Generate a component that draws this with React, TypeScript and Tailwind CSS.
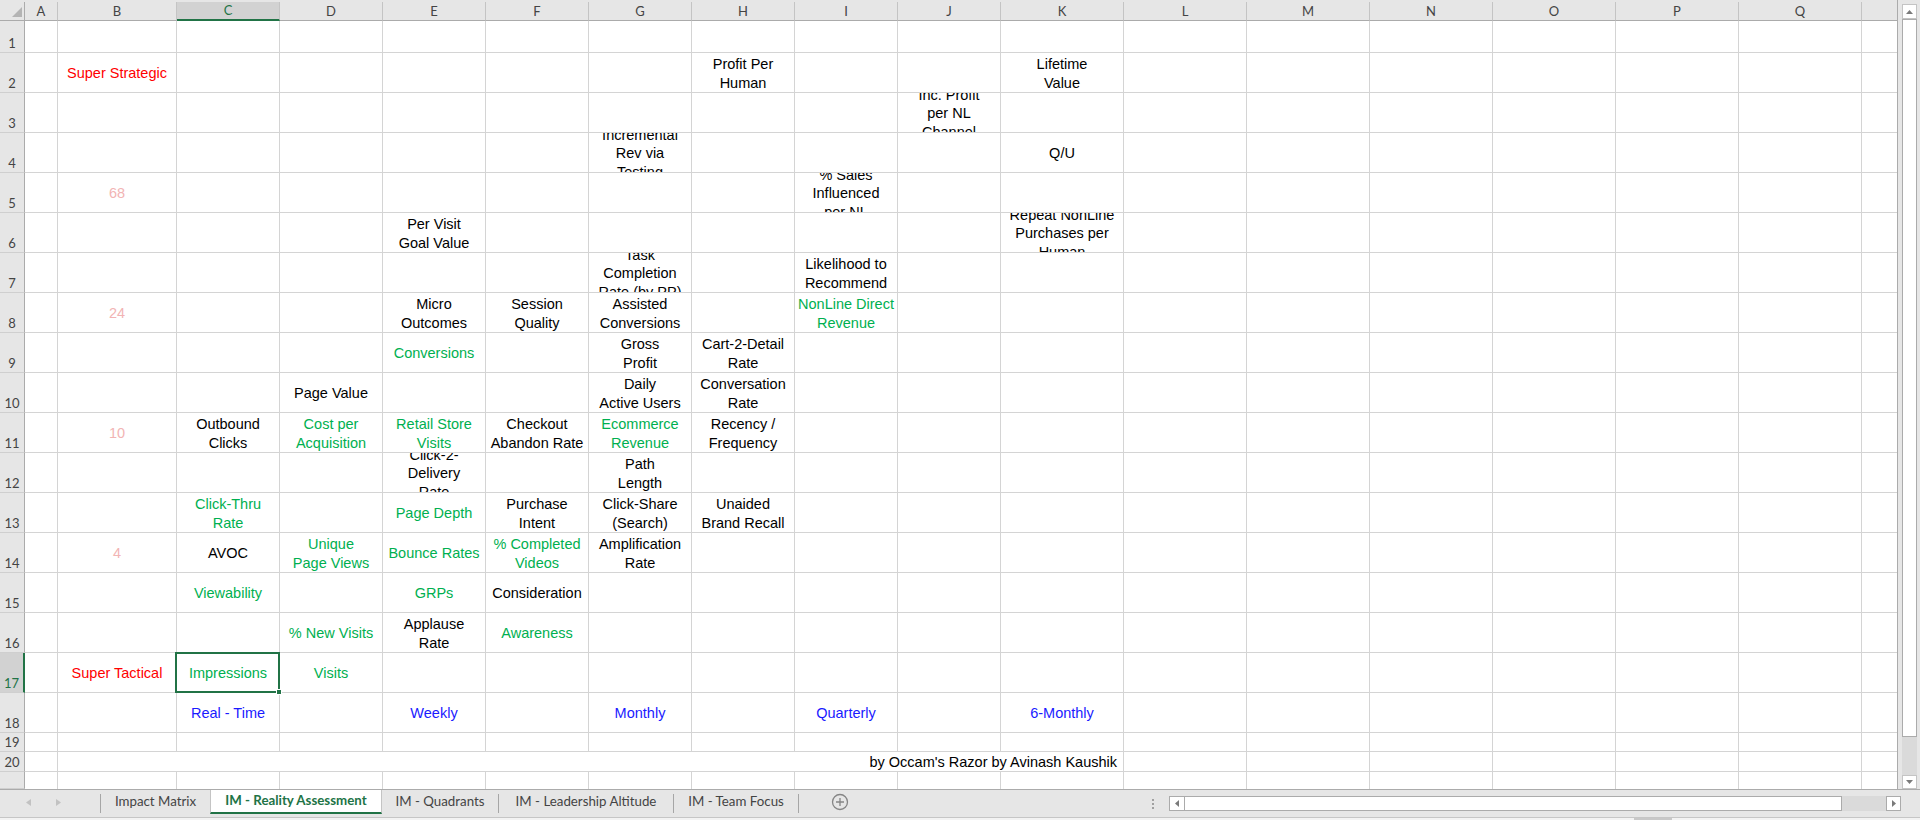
import React from "react";

type Tone = "k" | "r" | "g" | "b" | "p";

const tone: Record<Tone, string> = {
  k: "text-black",
  r: "text-[#ff0000]",
  g: "text-[#00b050]",
  b: "text-[#1a1aff]",
  p: "text-[#f2b4b4]",
};

const letters = "ABCDEFGHIJKLMNOPQR".split("");

// row -> column -> [text, colour]
const cells: Record<number, Record<string, [string, Tone]>> = {
  2: { B: ["Super Strategic", "r"], H: ["Profit Per\nHuman", "k"], K: ["Lifetime\nValue", "k"] },
  3: { J: ["Inc. Profit\nper NL\nChannel", "k"] },
  4: { G: ["Incremental\nRev via\nTesting", "k"], K: ["Q/U", "k"] },
  5: { B: ["68", "p"], I: ["% Sales\nInfluenced\nper NL", "k"] },
  6: { E: ["Per Visit\nGoal Value", "k"], K: ["Repeat NonLine\nPurchases per\nHuman", "k"] },
  7: { G: ["Task\nCompletion\nRate (by PP)", "k"], I: ["Likelihood to\nRecommend", "k"] },
  8: {
    B: ["24", "p"],
    E: ["Micro\nOutcomes", "k"],
    F: ["Session\nQuality", "k"],
    G: ["Assisted\nConversions", "k"],
    I: ["NonLine Direct\nRevenue", "g"],
  },
  9: { E: ["Conversions", "g"], G: ["Gross\nProfit", "k"], H: ["Cart-2-Detail\nRate", "k"] },
  10: { D: ["Page Value", "k"], G: ["Daily\nActive Users", "k"], H: ["Conversation\nRate", "k"] },
  11: {
    B: ["10", "p"],
    C: ["Outbound\nClicks", "k"],
    D: ["Cost per\nAcquisition", "g"],
    E: ["Retail Store\nVisits", "g"],
    F: ["Checkout\nAbandon Rate", "k"],
    G: ["Ecommerce\nRevenue", "g"],
    H: ["Recency /\nFrequency", "k"],
  },
  12: { E: ["Click-2-\nDelivery\nRate", "k"], G: ["Path\nLength", "k"] },
  13: {
    C: ["Click-Thru\nRate", "g"],
    E: ["Page Depth", "g"],
    F: ["Purchase\nIntent", "k"],
    G: ["Click-Share\n(Search)", "k"],
    H: ["Unaided\nBrand Recall", "k"],
  },
  14: {
    B: ["4", "p"],
    C: ["AVOC", "k"],
    D: ["Unique\nPage Views", "g"],
    E: ["Bounce Rates", "g"],
    F: ["% Completed\nVideos", "g"],
    G: ["Amplification\nRate", "k"],
  },
  15: { C: ["Viewability", "g"], E: ["GRPs", "g"], F: ["Consideration", "k"] },
  16: { D: ["% New Visits", "g"], E: ["Applause\nRate", "k"], F: ["Awareness", "g"] },
  17: { B: ["Super Tactical", "r"], C: ["Impressions", "g"], D: ["Visits", "g"] },
  18: {
    C: ["Real - Time", "b"],
    E: ["Weekly", "b"],
    G: ["Monthly", "b"],
    I: ["Quarterly", "b"],
    K: ["6-Monthly", "b"],
  },
};

const rows = Array.from({ length: 21 }, (_, i) => i + 1);

function RowHead({ n }: { n: number }) {
  const active = n === 17;
  return (
    <div
      className={`flex items-end justify-center pb-[1px] leading-[16px] font-['Lato',sans-serif] text-[13px] border-b border-b-[#cfcfcf] ${
        active
          ? "bg-[#d2d2d2] text-[#217346] border-r-2 border-r-[#217346]"
          : "bg-[#e6e6e6] text-[#444] border-r border-r-[#ababab]"
      }`}
    >
      {n <= 20 ? n : ""}
    </div>
  );
}

function Cell({ row, col }: { row: number; col: string }) {
  const entry = cells[row]?.[col];
  const last = col === "R";
  const selected = row === 17 && col === "C";
  const border = `${last ? "" : "border-r"} ${row === 21 ? "" : "border-b"} border-[#d4d4d4]`;
  return (
    <div
      className={`${border} flex items-center justify-center text-center pt-[2px] ${
        selected ? "relative z-10" : "overflow-hidden"
      }`}
    >
      {entry && (
        <span className={`whitespace-pre ${tone[entry[1]]}`}>{entry[0]}</span>
      )}
      {selected && (
        <>
          <div className="absolute -top-[1px] -left-[2px] -right-[1px] -bottom-[1px] border-2 border-[#217346]" />
          <div className="absolute -right-[3px] -bottom-[3px] w-[6px] h-[6px] bg-[#217346] border border-white" />
        </>
      )}
    </div>
  );
}

function Sheet() {
  return (
    <div className="w-[1898px] h-[789px] pt-[2px] bg-[#e6e6e6] border-r border-[#ababab] overflow-hidden">
      <div className="grid grid-cols-[25px_33px_119px_repeat(8,103px)_123px_repeat(6,123px)_35px] grid-rows-[19px_32px_repeat(17,40px)_19px_20px_17px] bg-white font-['Liberation_Sans',Arial,sans-serif] text-[14.5px] leading-[18.5px]">
        {/* header row */}
        <div className="bg-[#e6e6e6] border-r border-b border-[#ababab]">
          <svg width="25" height="19" viewBox="0 0 25 19">
            <polygon points="22,5 22,15 12,15" fill="#b4b4b4" />
          </svg>
        </div>
        {letters.map((l) => (
          <div
            key={l}
            className={`flex items-center justify-center font-['Lato',sans-serif] text-[13px] ${
              l === "C"
                ? "bg-[#d2d2d2] text-[#217346] border-b-2 border-b-[#217346]"
                : "bg-[#e6e6e6] text-[#444] border-b border-b-[#ababab]"
            } ${l === "R" ? "" : "border-r border-r-[#c4c4c4]"}`}
          >
            {l === "R" ? "" : l}
          </div>
        ))}

        {rows.map((r) => (
          <React.Fragment key={r}>
            <RowHead n={r} />
            {r === 20 ? (
              <>
                <Cell row={r} col="A" />
                <div className="col-span-10 border-r border-b border-[#d4d4d4] flex items-center justify-end pr-[6px] pt-[2px] text-black">
                  by Occam's Razor by Avinash Kaushik
                </div>
                {letters.slice(11).map((c) => (
                  <Cell key={c} row={r} col={c} />
                ))}
              </>
            ) : (
              letters.map((c) => <Cell key={c} row={r} col={c} />)
            )}
          </React.Fragment>
        ))}
      </div>
    </div>
  );
}

function VScroll() {
  return (
    <div className="w-[22px] h-[789px] bg-[#e6e6e6] flex flex-col pt-[4px] pl-[4px]">
      <div className="w-[15px] h-[15px] bg-white border border-[#c4c4c4] flex items-center justify-center">
        <svg width="7" height="4" viewBox="0 0 7 4">
          <polygon points="0,4 7,4 3.5,0" fill="#7a7a7a" />
        </svg>
      </div>
      <div className="w-[15px] h-[718px] bg-white border border-[#ababab]" />
      <div className="w-[15px] h-[38px] bg-[#dadada]" />
      <div className="w-[15px] h-[14px] bg-white border border-[#c4c4c4] flex items-center justify-center">
        <svg width="7" height="4" viewBox="0 0 7 4">
          <polygon points="0,0 7,0 3.5,4" fill="#7a7a7a" />
        </svg>
      </div>
    </div>
  );
}

function Sep() {
  return <div className="w-[1px] h-[19px] mt-[4px] bg-[#a6a6a6]" />;
}

function Tab({ label, w, active }: { label: string; w: string; active?: boolean }) {
  return (
    <div
      className={`${w} h-[24px] flex items-center justify-center whitespace-nowrap ${
        active
          ? "bg-white text-[#217346] font-bold border-b-2 border-b-[#217346] border-x border-x-[#c4c4c4]"
          : "text-[#444]"
      }`}
    >
      {label}
    </div>
  );
}

function TabBar() {
  return (
    <div className="h-[28px] flex items-start border-t border-[#ababab] bg-[#e6e6e6] font-['Lato',sans-serif] text-[13.3px]">
      <div className="w-[100px] h-[24px] flex items-center">
        <svg width="100" height="24" viewBox="0 0 100 24">
          <polygon points="31,9 31,16 26,12.5" fill="#c2c2c2" />
          <polygon points="56,9 56,16 61,12.5" fill="#c2c2c2" />
        </svg>
      </div>
      <Sep />
      <Tab label="Impact Matrix" w="w-[109px]" />
      <Tab label="IM - Reality Assessment" w="w-[172px]" active />
      <Tab label="IM - Quadrants" w="w-[116px]" />
      <Sep />
      <Tab label="IM - Leadership Altitude" w="w-[174px]" />
      <Sep />
      <Tab label="IM - Team Focus" w="w-[124px]" />
      <Sep />
      <div className="w-[82px] h-[24px] flex items-center justify-center">
        <svg width="18" height="18" viewBox="0 0 18 18">
          <circle cx="9" cy="9" r="7.5" fill="none" stroke="#858585" strokeWidth="1.3" />
          <path d="M9 5v8M5 9h8" stroke="#858585" strokeWidth="1.3" />
        </svg>
      </div>
      <div className="ml-auto h-[27px] flex items-center mr-[19px]">
        <div className="w-[16px] flex flex-col items-center gap-[2px]">
          <span className="w-[2px] h-[2px] bg-[#a0a0a0]" />
          <span className="w-[2px] h-[2px] bg-[#a0a0a0]" />
          <span className="w-[2px] h-[2px] bg-[#a0a0a0]" />
        </div>
        <div className="ml-[8px] w-[732px] h-[15px] flex">
          <div className="w-[16px] h-full bg-white border border-[#ababab] flex items-center justify-center">
            <svg width="4" height="7" viewBox="0 0 4 7">
              <polygon points="4,0 4,7 0,3.5" fill="#7a7a7a" />
            </svg>
          </div>
          <div className="w-[657px] h-full bg-white border-y border-r border-[#ababab]" />
          <div className="flex-1 h-full bg-[#dadada]" />
          <div className="w-[15px] h-full bg-white border border-[#ababab] flex items-center justify-center">
            <svg width="4" height="7" viewBox="0 0 4 7">
              <polygon points="0,0 0,7 4,3.5" fill="#7a7a7a" />
            </svg>
          </div>
        </div>
      </div>
    </div>
  );
}

export default function App() {
  return (
    <div className="w-[1920px] h-[820px] overflow-hidden bg-[#e6e6e6] flex flex-col">
      <div className="flex h-[789px]">
        <Sheet />
        <VScroll />
      </div>
      <TabBar />
      <div className="h-[3px] border-t border-[#c6c6c6] bg-[#f3f3f3] flex">
        <div className="ml-[1634px] w-[38px] h-full bg-[#c8c8c8]" />
      </div>
    </div>
  );
}
